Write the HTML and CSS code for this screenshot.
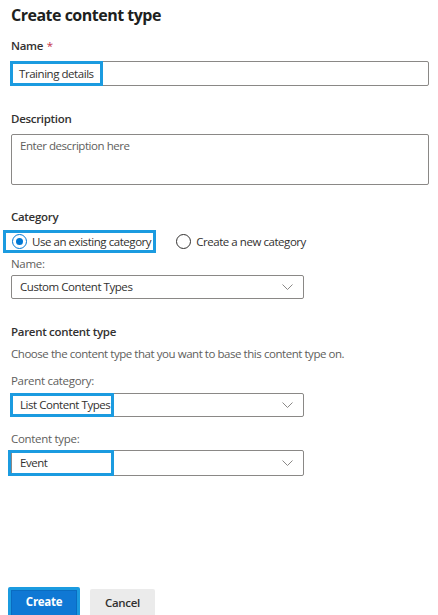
FILE: index.html
```html
<!DOCTYPE html>
<html lang="en">
<head>
<meta charset="utf-8">
<title>Create content type</title>
<link rel="stylesheet" href="styles.css">
</head>
<body>
<div class="panel">
  <h1 class="title">Create content type</h1>

  <div class="label label-name">Name <span class="req">*</span></div>
  <div class="box text-input">
    <span class="val">Training details</span>
    <span class="hl hl-name"></span>
  </div>

  <div class="label label-desc">Description</div>
  <div class="box textarea"><span class="ph">Enter description here</span></div>

  <div class="label label-cat">Category</div>
  <div class="radios">
    <div class="radio radio-on"><span class="circle"></span><span>Use an existing category</span></div>
    <div class="radio"><span class="circle"></span><span>Create a new category</span></div>
  </div>

  <div class="sublabel sub-name">Name:</div>
  <div class="box select sel-cat">
    <span class="val">Custom Content Types</span>
    <svg class="chev" width="11" height="6" viewBox="0 0 11 6"><path d="M0.5 0.5 L5.5 5.5 L10.5 0.5" fill="none" stroke="#8a8886" stroke-width="1"/></svg>
  </div>

  <div class="label label-parent">Parent content type</div>
  <div class="desc">Choose the content type that you want to base this content type on.</div>

  <div class="sublabel sub-pcat">Parent category:</div>
  <div class="box select sel-pcat">
    <span class="val">List Content Types</span>
    <svg class="chev" width="11" height="6" viewBox="0 0 11 6"><path d="M0.5 0.5 L5.5 5.5 L10.5 0.5" fill="none" stroke="#8a8886" stroke-width="1"/></svg>
    <span class="hl hl-pcat"></span>
  </div>

  <div class="sublabel sub-ctype">Content type:</div>
  <div class="box select sel-ctype">
    <span class="val">Event</span>
    <svg class="chev" width="11" height="6" viewBox="0 0 11 6"><path d="M0.5 0.5 L5.5 5.5 L10.5 0.5" fill="none" stroke="#8a8886" stroke-width="1"/></svg>
    <span class="hl hl-ctype"></span>
  </div>

  <div class="actions">
    <button class="btn btn-primary">Create</button>
    <button class="btn btn-default">Cancel</button>
  </div>
</div>
</body>
</html>
```

FILE: styles.css
```css
html, body {
  margin: 0;
  padding: 0;
  background: #ffffff;
  height: 615px;
  overflow: hidden;
}

body {
  font-family: "Open Sans", "Noto Sans", "Liberation Sans", sans-serif;
  color: #323130;
  font-size: 11.5px;
}

.panel {
  display: flex;
  flex-direction: column;
  align-items: flex-start;
  padding: 4px 0 0 11px;
}

.title {
  margin: 0;
  font-size: 16px;
  line-height: 22px;
  font-weight: 700;
  color: #201f1e;
  letter-spacing: -0.5px;
}

.label {
  font-size: 11.5px;
  line-height: 16px;
  font-weight: 600;
  color: #323130;
  letter-spacing: -0.3px;
}

.req {
  color: #c4314b;
  font-weight: 400;
  margin-left: 1px;
}

.sublabel {
  font-size: 11.5px;
  line-height: 16px;
  color: #605e5c;
  letter-spacing: -0.3px;
}

.desc {
  font-size: 11.5px;
  line-height: 16px;
  color: #605e5c;
  letter-spacing: -0.45px;
  margin-top: 6px;
}

.label-name { margin-top: 12px; }
.label-desc { margin-top: 25px; }
.label-cat { margin-top: 24px; }
.label-parent { margin-top: 25px; }
.sub-name { margin-top: 3px; }
.sub-pcat { margin-top: 11px; }
.sub-ctype { margin-top: 14px; }

.box {
  position: relative;
  box-sizing: border-box;
  border: 1px solid #8a8886;
  border-radius: 2px;
  background: #ffffff;
  font-size: 11.5px;
  color: #323130;
  letter-spacing: -0.45px;
}

.text-input {
  margin-top: 7px;
  margin-left: -1px;
  width: 419px;
  height: 25px;
  line-height: 23px;
  padding-left: 8px;
}

.textarea {
  margin-top: 7px;
  width: 418px;
  height: 51px;
  padding: 3px 8px;
  line-height: 16px;
}

.ph {
  color: #605e5c;
}

.select {
  display: flex;
  align-items: center;
  justify-content: space-between;
  width: 293px;
  padding: 0 8px 0 8px;
  line-height: 22px;
}

.sel-cat { margin-top: 3px; height: 24px; }
.sel-pcat { margin-top: 4px; height: 24px; }
.sel-ctype { margin-top: 3px; height: 26px; }

.chev {
  display: block;
  margin-right: 2px;
}

.hl {
  position: absolute;
  box-sizing: border-box;
  border: 3px solid #1b9be0;
  pointer-events: none;
}

.hl-name {
  left: -1px;
  top: -1px;
  width: 93px;
  height: 25px;
}

.hl-pcat {
  left: -2px;
  top: -1px;
  width: 104px;
  height: 24px;
}

.hl-ctype {
  left: -4px;
  top: -1px;
  width: 106px;
  height: 26px;
}

.radios {
  display: flex;
  align-items: center;
  margin-top: 5px;
  margin-left: -8px;
}

.radio {
  display: flex;
  align-items: center;
  box-sizing: border-box;
  height: 23px;
  font-size: 11.5px;
  color: #323130;
  letter-spacing: -0.45px;
  gap: 5px;
}

.radio-on {
  border: 3px solid #1b9be0;
  padding: 0 2px 0 6px;
  margin-right: 20px;
}

.circle {
  box-sizing: border-box;
  width: 15px;
  height: 15px;
  border: 1px solid #323130;
  border-radius: 50%;
  display: flex;
  align-items: center;
  justify-content: center;
  flex: none;
}

.radio-on .circle {
  border-color: #0078d4;
}

.radio-on .circle::after {
  content: "";
  width: 7px;
  height: 7px;
  border-radius: 50%;
  background: #0078d4;
}

.actions {
  display: flex;
  align-items: flex-start;
  gap: 10px;
  margin-top: 111px;
  margin-left: -3px;
}

.btn {
  font-family: "Open Sans", "Noto Sans", "Liberation Sans", sans-serif;
  font-size: 11.5px;
  font-weight: 700;
  border-radius: 2px;
  cursor: pointer;
  letter-spacing: -0.3px;
  padding: 0 0 3px 0;
}

.btn-primary {
  width: 72px;
  height: 32px;
  background: #0f78d4;
  color: #ffffff;
  border: 3px solid #1b9be0;
  box-shadow: inset 0 0 0 1px #0a6cc0;
}

.btn-default {
  width: 65px;
  height: 30px;
  margin-top: 2px;
  background: #ebebeb;
  color: #323130;
  border: none;
  font-weight: 600;
}
```
